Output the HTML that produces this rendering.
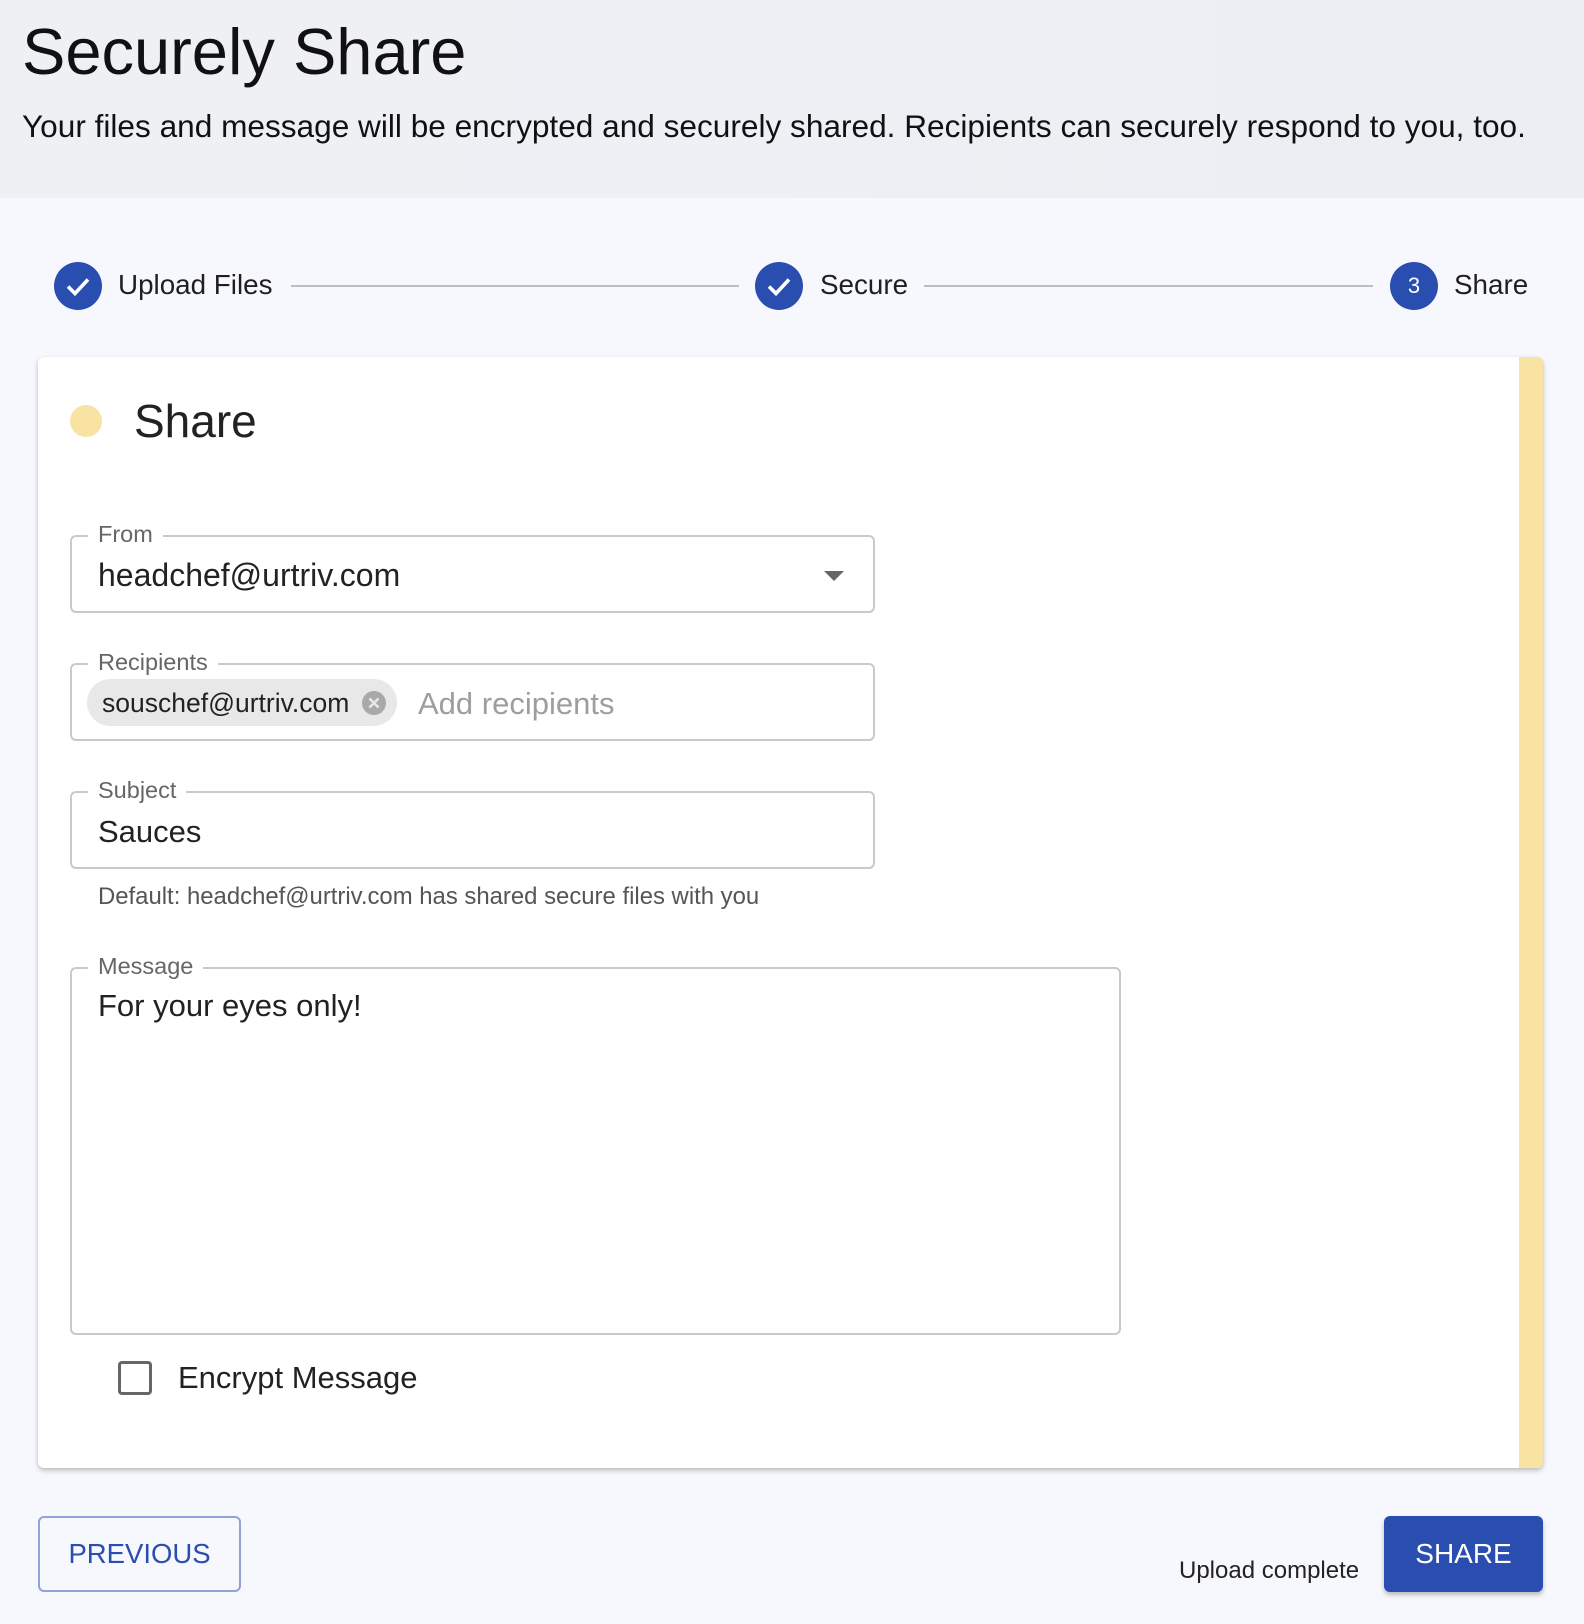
<!DOCTYPE html>
<html><head><meta charset="utf-8"><style>
*{box-sizing:border-box;margin:0;padding:0}
body{width:1584px;height:1624px;background:#f7f8fd;font-family:"Liberation Sans",Arial,sans-serif;color:#1f1f1f;position:relative;overflow:hidden}
.hdr{position:absolute;left:0;top:0;width:1584px;height:198px;background:linear-gradient(90deg,#eef1f4,#eceef3)}
.abs{position:absolute;white-space:nowrap}
.circ{position:absolute;width:48px;height:48px;border-radius:50%;background:#2a4db0;color:#fff;text-align:center;line-height:48px;font-size:22px}
.line{position:absolute;height:2px;background:#bdbdbd;top:285px}
.card{position:absolute;left:38px;top:357px;width:1505px;height:1111px;background:#fff;border-radius:6px;box-shadow:0 3px 6px rgba(0,0,0,.18),0 1px 3px rgba(0,0,0,.1);overflow:hidden}
.strip{position:absolute;right:0;top:0;width:24px;height:100%;background:#f8e3a3}
.fld{position:absolute;border:2px solid #c9c9c9;border-radius:6px}
.lbl{position:absolute;top:-16px;left:16px;background:#fff;padding:0 10px;font-size:23.5px;color:#666}
.val{position:absolute;font-size:32px;color:#222}
</style></head><body>
<div class="hdr"></div>
<div class="abs" style="left:22px;top:14px;font-size:65px;color:#111">Securely Share</div>
<div class="abs" style="left:22px;top:108px;font-size:31.6px;color:#111">Your files and message will be encrypted and securely shared. Recipients can securely respond to you, too.</div>

<div class="circ" style="left:54px;top:262px"><svg width="48" height="48" viewBox="0 0 48 48"><path d="M14 24.5l7 7 13-14" stroke="#fff" stroke-width="3.6" fill="none"/></svg></div>
<div class="abs" style="left:118px;top:269px;font-size:27.8px">Upload Files</div>
<div class="line" style="left:291px;width:448px"></div>
<div class="circ" style="left:755px;top:262px"><svg width="48" height="48" viewBox="0 0 48 48"><path d="M14 24.5l7 7 13-14" stroke="#fff" stroke-width="3.6" fill="none"/></svg></div>
<div class="abs" style="left:820px;top:269px;font-size:27.8px">Secure</div>
<div class="line" style="left:924px;width:449px"></div>
<div class="circ" style="left:1390px;top:262px">3</div>
<div class="abs" style="left:1454px;top:269px;font-size:27.8px">Share</div>

<div class="card">
<div class="strip"></div>
<div class="abs" style="left:32px;top:48px;width:32px;height:32px;border-radius:50%;background:#f8e3a3"></div>
<div class="abs" style="left:96px;top:37px;font-size:46px;color:#222">Share</div>

<div class="fld" style="left:32px;top:178px;width:805px;height:78px">
<div class="lbl">From</div>
<div class="val" style="left:26px;top:20px">headchef@urtriv.com</div>
<div class="abs" style="left:752px;top:34px;width:0;height:0;border-left:10px solid transparent;border-right:10px solid transparent;border-top:10px solid #666"></div>
</div>

<div class="fld" style="left:32px;top:306px;width:805px;height:78px">
<div class="lbl">Recipients</div>
<div class="abs" style="left:15px;top:14px;width:310px;height:47px;border-radius:24px;background:#e8e8e8"></div>
<div class="abs" style="left:30px;top:23px;font-size:26.5px;color:#222">souschef@urtriv.com</div>
<svg class="abs" style="left:289px;top:25px" width="26" height="26" viewBox="0 0 26 26"><circle cx="13" cy="13" r="12" fill="#a9a9a9"/><path d="M8.5 8.5l9 9M17.5 8.5l-9 9" stroke="#e8e8e8" stroke-width="2.6"/></svg>
<div class="val" style="left:346px;top:21px;color:#9e9e9e;font-size:31px">Add recipients</div>
</div>

<div class="fld" style="left:32px;top:434px;width:805px;height:78px">
<div class="lbl">Subject</div>
<div class="val" style="left:26px;top:21px;font-size:31px">Sauces</div>
</div>
<div class="abs" style="left:60px;top:526px;font-size:23.9px;color:#555">Default: headchef@urtriv.com has shared secure files with you</div>

<div class="fld" style="left:32px;top:610px;width:1051px;height:368px">
<div class="lbl">Message</div>
<div class="val" style="left:26px;top:19px;font-size:31px">For your eyes only!</div>
</div>

<div class="abs" style="left:80px;top:1004px;width:34px;height:34px;border:3.5px solid #666;border-radius:4px"></div>
<div class="abs" style="left:140px;top:1003px;font-size:31px;color:#222">Encrypt Message</div>
</div>

<div class="abs" style="left:38px;top:1516px;width:203px;height:76px;border:2px solid #8fa3d9;border-radius:6px;color:#2a4db0;font-size:27.5px;text-align:center;line-height:72px">PREVIOUS</div>
<div class="abs" style="left:1179px;top:1557px;font-size:24px;color:#222">Upload complete</div>
<div class="abs" style="left:1384px;top:1516px;width:159px;height:76px;background:#2a4db0;border-radius:6px;color:#fff;font-size:28px;text-align:center;line-height:76px;box-shadow:0 3px 5px rgba(0,0,0,.25)">SHARE</div>
</body></html>
